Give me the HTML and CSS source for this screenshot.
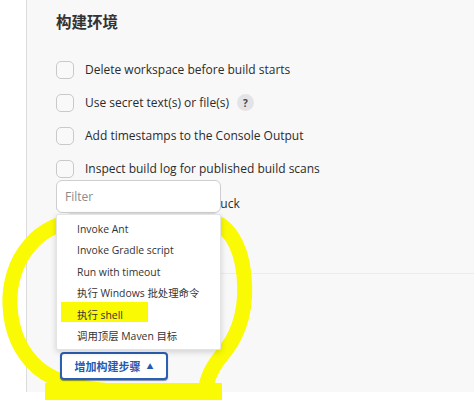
FILE: index.html
```html
<!DOCTYPE html>
<html lang="zh-CN">
<head>
<meta charset="utf-8">
<title>构建环境</title>
<link rel="stylesheet" href="styles.css">
</head>
<body>
<div class="page">
  <div class="gutter"></div>
  <main class="panel">
    <section class="section">
      <h2 class="title">构建环境</h2>
      <ul class="options">
        <li class="opt"><span class="box"></span><span class="label">Delete workspace before build starts</span></li>
        <li class="opt"><span class="box"></span><span class="label">Use secret text(s) or file(s)</span><span class="help">?</span></li>
        <li class="opt"><span class="box"></span><span class="label">Add timestamps to the Console Output</span></li>
        <li class="opt"><span class="box"></span><span class="label">Inspect build log for published build scans</span></li>
        <li class="opt"><span class="box"></span><span class="label stuck">tuck</span></li>
      </ul>
    </section>
    <hr class="divider">
    <section class="section build">
      <button class="add-step" type="button">增加构建步骤 <span class="caret">▲</span></button>
    </section>
  </main>
</div>

<svg class="scribble" width="474" height="400" viewBox="0 0 474 400" aria-hidden="true">
  <path d="M 205 219 C 228 222 241 245 244 275 C 247 305 241 330 226 350 C 216 362 209 372 206 386" />
  <path d="M 210 219 C 170 212 120 212 90 217 C 60 221 42 230 30 245 C 15 262 9 285 10 305 C 11 330 20 352 38 368 C 55 382 80 390 120 391" />
  <rect class="blob" x="45" y="383" width="177" height="17" />
</svg>

<div class="dropdown">
  <div class="filter">Filter</div>
  <ul class="menu">
    <li class="item">Invoke Ant</li>
    <li class="item">Invoke Gradle script</li>
    <li class="item">Run with timeout</li>
    <li class="item">执行 Windows 批处理命令</li>
    <li class="item marked">执行 shell</li>
    <li class="item">调用顶层 Maven 目标</li>
  </ul>
</div>
</body>
</html>
```

FILE: styles.css
```css
html, body {
  margin: 0;
  padding: 0;
  background: #ffffff;
}
body {
  width: 474px;
  height: 400px;
  overflow: hidden;
  position: relative;
  font-family: "Open Sans", "Noto Sans", "Noto Sans CJK SC", sans-serif;
  color: #222;
}
.page {
  display: flex;
  height: 392px;
}
.gutter {
  width: 26px;
  flex: none;
  background: #fff;
}
.panel {
  flex: 1;
  background: #f8f8f9;
  border-left: 1px solid #dcdcdc;
  box-sizing: border-box;
}
.section {
  padding-left: 29px;
}
.title {
  margin: 9px 0 0;
  font-family: "Noto Sans CJK SC", sans-serif;
  font-size: 15.5px;
  line-height: 24px;
  font-weight: 700;
  color: #333;
}
.options {
  list-style: none;
  margin: 20px 0 0;
  padding: 0;
}
.opt {
  display: flex;
  align-items: center;
  height: 33px;
}
.opt:last-child {
  height: 36px;
}
.box {
  width: 16px;
  height: 16px;
  border: 1.5px solid #c9c9cb;
  border-radius: 5px;
  background: #f9f9fa;
  flex: none;
}
.label {
  margin-left: 11px;
  font-size: 12px;
  color: #2b2b2b;
}
.label.stuck {
  margin-left: 142px;
}
.help {
  margin-left: 8px;
  width: 17px;
  height: 17px;
  border-radius: 50%;
  background: #e4e4e6;
  color: #444;
  font-size: 10px;
  font-weight: 700;
  display: flex;
  align-items: center;
  justify-content: center;
}
.divider {
  margin: 52px 0 0 29px;
  border: 0;
  border-top: 1px solid #ececee;
  height: 0;
}
.add-step {
  margin: 78px 0 0 4px;
  width: 108px;
  height: 28px;
  border: 2px solid #2a5fb3;
  border-radius: 4px;
  background: #fff;
  color: #2459b0;
  font-family: "Noto Sans CJK SC", sans-serif;
  font-size: 11px;
  font-weight: 700;
  display: flex;
  align-items: center;
  justify-content: center;
  gap: 6px;
  padding: 0;
  position: relative;
  z-index: 2;
  box-shadow: 0 1px 1px rgba(20, 40, 80, 0.5);
}
.caret {
  font-size: 7px;
}
.scribble {
  position: absolute;
  left: 0;
  top: 0;
  z-index: 1;
}
.scribble path {
  fill: none;
  stroke: #fafa05;
  stroke-width: 15;
  stroke-linecap: round;
}
.blob {
  fill: #fafa05;
}
.dropdown {
  position: absolute;
  left: 56px;
  top: 180px;
  width: 165px;
  z-index: 3;
}
.filter {
  height: 33px;
  box-sizing: border-box;
  border: 1px solid #cfcfd2;
  border-radius: 6px;
  background: #fff;
  padding-left: 8px;
  display: flex;
  align-items: center;
  font-size: 12px;
  color: #8b8b8b;
}
.menu {
  list-style: none;
  margin: 1px 0 0;
  padding: 4px 0;
  height: 136px;
  box-sizing: border-box;
  background: #fff;
  border: 1px solid #e4e4e4;
  border-radius: 2px;
  box-shadow: 0 2px 6px rgba(0, 0, 0, 0.16);
  position: relative;
  z-index: 0;
}
.item {
  height: 21.4px;
  line-height: 21.4px;
  padding-left: 20px;
  font-family: "Open Sans", "Noto Sans CJK SC", sans-serif;
  font-size: 10.4px;
  color: #333;
  position: relative;
  white-space: nowrap;
}
.marked::before {
  content: "";
  position: absolute;
  left: 4px;
  top: -3px;
  width: 87px;
  height: 20px;
  background: #fafa05;
  z-index: -1;
}
```
